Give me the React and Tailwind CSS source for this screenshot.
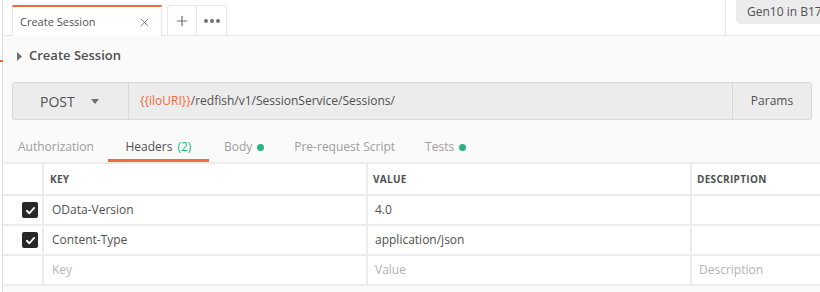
import { X, Plus } from 'lucide-react';

const rows = [
  { key: 'OData-Version', value: '4.0' },
  { key: 'Content-Type', value: 'application/json' },
];

function Check() {
  return (
    <span className="w-[16px] h-[16px] rounded-[2px] bg-[#282828] flex items-center justify-center">
      <svg width="11" height="11" viewBox="0 0 12 12" fill="none">
        <path d="M2 6.3 L4.8 9 L10 3.2" stroke="#fff" strokeWidth="2" strokeLinecap="round" strokeLinejoin="round" />
      </svg>
    </span>
  );
}

export default function App() {
  return (
    <div className="w-[820px] h-[292px] bg-white pl-[2px] overflow-hidden font-['Open_Sans',sans-serif] text-[#505050]">
      <div className="relative h-full bg-[#fafafa] border-l border-[#dedede]">
        <div className="absolute -left-[3px] top-[60px] w-[3px] h-[2px] bg-[#f26b3a]" />

        {/* tab bar */}
        <div className="h-[36px] bg-white border-b border-[#e6e6e6] flex items-end">
          <div className="ml-[9px] -mb-px h-[31px] w-[150px] bg-white border-t-2 border-t-[#f26b3a] border-x border-x-[#e6e6e6] flex items-center justify-between pl-[7px] pr-[10px] pt-[2px]">
            <span className="text-[11px]">Create Session</span>
            <X size={13} strokeWidth={1.6} className="text-[#707070]" />
          </div>
          <div className="ml-[5px] h-[30px] flex border border-b-0 border-[#e6e6e6] rounded-t-[3px] bg-white">
            <div className="w-[29px] flex items-center justify-center border-r border-[#e6e6e6]">
              <Plus size={16} strokeWidth={1.8} className="text-[#707070]" />
            </div>
            <div className="w-[29px] flex items-center justify-center gap-[2px]">
              <span className="w-[4px] h-[4px] rounded-full bg-[#707070]" />
              <span className="w-[4px] h-[4px] rounded-full bg-[#707070]" />
              <span className="w-[4px] h-[4px] rounded-full bg-[#707070]" />
            </div>
          </div>
          <div className="flex-1" />
          <div className="self-stretch w-px bg-[#e6e6e6]" />
          <div className="self-start ml-[10px] h-[24px] w-[84px] shrink-0 bg-[#ececec] rounded-bl-[5px] pl-[11px] flex items-center text-[12px] whitespace-nowrap">
            Gen10 in B17
          </div>
        </div>

        {/* request name */}
        <div className="h-[46px] flex items-center pl-[14px] pb-[6px]">
          <svg width="6" height="9" viewBox="0 0 6 9" className="mr-[6px]">
            <path d="M0 0 L5 4.5 L0 9 Z" fill="#707070" />
          </svg>
          <span className="text-[13px] font-semibold">Create Session</span>
        </div>

        {/* url bar */}
        <div className="ml-[9px] mr-[8px] h-[38px] flex bg-[#ececec] border border-[#d8d8d8] rounded-[3px]">
          <div className="w-[116px] flex items-center pl-[27px] border-r border-[#d8d8d8]">
            <span className="text-[14px] font-medium">POST</span>
            <svg width="8" height="5" viewBox="0 0 8 5" className="ml-[16px]">
              <path d="M0 0 H8 L4 5 Z" fill="#707070" />
            </svg>
          </div>
          <div className="flex-1 flex items-center pl-[11px] text-[12px]">
            <span className="text-[#f26b3a]">{'{{iloURI}}'}</span>
            <span>/redfish/v1/SessionService/Sessions/</span>
          </div>
          <div className="w-[79px] flex items-center justify-center border-l border-[#d8d8d8] text-[12px]">
            Params
          </div>
        </div>

        {/* sub tabs */}
        <div className="h-[42px] flex text-[12px] text-[#9e9e9e] pl-px">
          <div className="px-[14px] pt-[15px] flex items-center border-b-[3px] border-transparent">Authorization</div>
          <div className="w-[101px] pt-[15px] flex items-center justify-center border-b-[3px] border-[#f26b3a] text-[#505050]">
            Headers<span className="ml-[5px] text-[#26b47f]">(2)</span>
          </div>
          <div className="px-[15px] pt-[15px] flex items-center border-b-[3px] border-transparent">
            Body<span className="ml-[5px] w-[7px] h-[7px] rounded-full bg-[#26b47f]" />
          </div>
          <div className="px-[15px] pt-[15px] flex items-center border-b-[3px] border-transparent">Pre-request Script</div>
          <div className="px-[15px] pt-[15px] flex items-center border-b-[3px] border-transparent">
            Tests<span className="ml-[5px] w-[7px] h-[7px] rounded-full bg-[#26b47f]" />
          </div>
        </div>

        {/* headers table */}
        <div className="border-t-2 border-[#ececec] bg-white grid grid-cols-[41px_324px_324px_1fr] text-[12px]">
          <div className="h-[32px] border-r-2 border-b-2 border-[#ececec]" />
          <div className="h-[32px] border-r-2 border-b-2 border-[#ececec] pl-[6px] flex items-center text-[10px] font-bold tracking-[0.3px]">KEY</div>
          <div className="h-[32px] border-r-2 border-b-2 border-[#ececec] pl-[5px] flex items-center text-[10px] font-bold tracking-[0.3px]">VALUE</div>
          <div className="h-[32px] border-b-2 border-[#ececec] pl-[5px] flex items-center text-[10px] font-bold tracking-[0.3px]">DESCRIPTION</div>
          {rows.map((r) => (
            <>
              <div key={r.key + 'c'} className="h-[30px] border-r-2 border-b-2 border-[#ececec] flex items-center justify-end pr-[4px]">
                <Check />
              </div>
              <div key={r.key + 'k'} className="h-[30px] border-r-2 border-b-2 border-[#ececec] pl-[8px] flex items-center">{r.key}</div>
              <div key={r.key + 'v'} className="h-[30px] border-r-2 border-b-2 border-[#ececec] pl-[7px] flex items-center">{r.value}</div>
              <div key={r.key + 'd'} className="h-[30px] border-b-2 border-[#ececec]" />
            </>
          ))}
          <div className="h-[30px] border-r-2 border-b-2 border-[#ececec]" />
          <div className="h-[30px] border-r-2 border-b-2 border-[#ececec] pl-[8px] flex items-center text-[#b3b3b3]">Key</div>
          <div className="h-[30px] border-r-2 border-b-2 border-[#ececec] pl-[7px] flex items-center text-[#b3b3b3]">Value</div>
          <div className="h-[30px] border-b-2 border-[#ececec] pl-[7px] flex items-center text-[#b3b3b3]">Description</div>
        </div>
      </div>
    </div>
  );
}
